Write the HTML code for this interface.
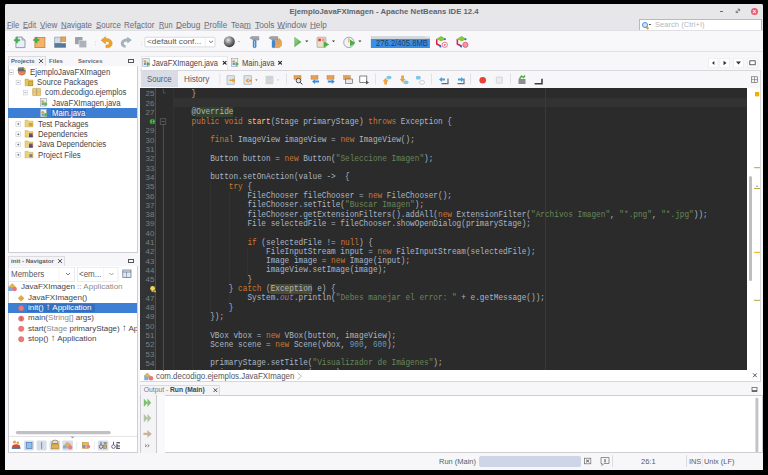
<!DOCTYPE html>
<html><head><meta charset="utf-8">
<style>
*{margin:0;padding:0;box-sizing:border-box}
html,body{width:768px;height:475px;overflow:hidden;background:#000}
body{position:relative;font-family:"Liberation Sans",sans-serif;color:#333}
.a{position:absolute}
.t{position:absolute;white-space:pre;line-height:1;z-index:3}
svg.a{z-index:2}
.menu{font-size:8.1px;color:#6a6a74;top:21.2px}
.menu u{text-decoration:underline;text-decoration-thickness:0.6px;text-underline-offset:0px;text-decoration-color:#9a9aa4}
.cl{position:absolute;z-index:3;left:172.6px;font-family:"Liberation Mono",monospace;font-size:8.8px;line-height:9.3px;height:9.3px;white-space:pre;color:#a9b7c6;transform:scaleX(0.8807);transform-origin:0 0}
.ln{position:absolute;z-index:3;left:140px;width:14.3px;text-align:right;font-family:"Liberation Sans",sans-serif;font-size:7.9px;padding-top:0.9px;line-height:9.3px;color:#7d7f82}
.k{color:#cc7832}.s{color:#6a8759}.n{color:#6897bb}.m{color:#ffc66d}.f{color:#9876aa;font-style:italic}
.ov{}.ex{}
.tr{position:absolute;z-index:3;white-space:pre;font-size:7.8px;line-height:10px;color:#3a3a3a}
.g{color:#8c8c8c}
.tab{position:absolute;white-space:pre;font-size:6.1px;font-weight:bold;line-height:1;color:#555;z-index:3}
</style></head><body>
<!-- window -->
<div class="a" style="left:5px;top:4px;width:758px;height:465.8px;background:#f7f7f9;border-radius:2px 2px 0 0"></div>
<!-- title + menubar -->
<div class="a" style="left:5px;top:4px;width:758px;height:26.2px;background:#e7e7ea;border-radius:2px 2px 0 0"></div>
<div class="t" style="left:5px;width:758px;text-align:center;top:8px;font-size:7.75px;font-weight:bold;color:#62656e">EjemploJavaFXImagen - Apache NetBeans IDE 12.4</div>
<!-- window buttons -->
<div class="a" style="left:719.6px;top:10.9px;width:3.8px;height:1px;background:#6a6a6a"></div>

<div class="a" style="left:750.7px;top:7.6px;width:7.4px;height:7.4px;border-radius:50%;background:#ea5a5e"></div>
<div class="t" style="left:750.7px;top:8.9px;width:7.4px;text-align:center;font-size:6.5px;font-weight:bold;color:#fff">×</div>
<!-- menu -->
<!-- search -->
<div class="a" style="left:639.4px;top:19.2px;width:122.5px;height:11.6px;background:#fff;border:1px solid #b9b9bd"></div>
<div class="a" style="left:641.5px;top:21.5px;width:6px;height:6px;border-radius:50%;border:1.3px solid #4a8fd8;background:#cfe3f7"></div>
<div class="a" style="left:646px;top:26.5px;width:3px;height:1.6px;background:#c89c3c;transform:rotate(45deg)"></div>
<!-- toolbar -->
<div class="a" style="left:5px;top:30.2px;width:758px;height:22.3px;background:#f8f8fa;border-top:0.6px solid #e0e0e4;border-bottom:1px solid #e0e0e4"></div>


<!-- ===== PROJECTS PANEL ===== -->
<div class="a" style="left:7.5px;top:55.5px;width:38.2px;height:11px;background:#f4f4f6;border:0.7px solid #dcdce0;border-bottom:none"></div>

<div class="a" style="left:128.4px;top:58.7px;width:5.5px;height:4.4px;border:0.8px solid #555;border-bottom-width:1.6px"></div>
<div class="a" style="left:7.5px;top:66.3px;width:130px;height:186.5px;background:#fff;border:1px solid #cdcdd2;border-top:none"></div>
<div class="a" style="left:8px;top:108px;width:129px;height:10px;background:#3d7fd4"></div>
<div class="t" style="left:30px;top:67.77px;font-size:8.3px;color:#44444e;transform:scaleX(0.935);transform-origin:0 0;">EjemploJavaFXImagen</div>
<div class="t" style="left:37.4px;top:78.12px;font-size:8.3px;color:#44444e;transform:scaleX(0.935);transform-origin:0 0;">Source Packages</div>
<div class="t" style="left:44.7px;top:88.47px;font-size:8.3px;color:#44444e;transform:scaleX(0.935);transform-origin:0 0;">com.decodigo.ejemplos</div>
<div class="t" style="left:52px;top:98.82px;font-size:8.3px;color:#44444e;transform:scaleX(0.935);transform-origin:0 0;">JavaFXImagen.java</div>
<div class="t" style="left:52px;top:109.17px;font-size:8.3px;color:#fff;transform:scaleX(0.935);transform-origin:0 0;">Main.java</div>
<div class="t" style="left:37.5px;top:119.52px;font-size:8.3px;color:#44444e;transform:scaleX(0.935);transform-origin:0 0;">Test Packages</div>
<div class="t" style="left:37.5px;top:129.87px;font-size:8.3px;color:#44444e;transform:scaleX(0.935);transform-origin:0 0;">Dependencies</div>
<div class="t" style="left:37.5px;top:140.22px;font-size:8.3px;color:#44444e;transform:scaleX(0.935);transform-origin:0 0;">Java Dependencies</div>
<div class="t" style="left:37.5px;top:150.57px;font-size:8.3px;color:#44444e;transform:scaleX(0.935);transform-origin:0 0;">Project Files</div>
<div class="a" style="left:8px;top:282px;width:129px;height:148px;overflow:hidden;z-index:3"><div class="a" style="left:-8px;top:-282px;width:768px;height:475px">
<div class="t" style="left:21px;top:283.44px;font-size:8.1px;color:#44444e;transform:scaleX(0.99);transform-origin:0 0;">JavaFXImagen <span class="g">:: Application</span></div>
<div class="t" style="left:28.3px;top:293.79px;font-size:8.1px;color:#44444e;transform:scaleX(0.99);transform-origin:0 0;">JavaFXImagen()</div>
<div class="t" style="left:27.7px;top:304.14px;font-size:8.1px;color:#fff;transform:scaleX(0.99);transform-origin:0 0;">init() <span style="font-size:9.5px;line-height:0">↑</span> Application</div>
<div class="t" style="left:27.7px;top:314.49px;font-size:8.1px;color:#44444e;transform:scaleX(0.99);transform-origin:0 0;">main(<span class="g">String[]</span> args)</div>
<div class="t" style="left:27.7px;top:324.84px;font-size:8.1px;color:#44444e;transform:scaleX(0.99);transform-origin:0 0;">start(<span class="g">Stage</span> primaryStage) <span style="font-size:9.5px;line-height:0">↑</span> Application</div>
<div class="t" style="left:27.7px;top:335.19px;font-size:8.1px;color:#44444e;transform:scaleX(0.99);transform-origin:0 0;">stop() <span style="font-size:9.5px;line-height:0">↑</span> Application</div>
</div></div>
<div class="t" style="left:11.1px;top:269.90px;font-size:8.5px;color:#5a5a64;transform:scaleX(0.94);transform-origin:0 0;">Members</div>
<div class="t" style="left:79.3px;top:269.90px;font-size:8.5px;color:#5a5a64;transform:scaleX(0.94);transform-origin:0 0;">&lt;em...</div>
<div class="a" style="left:51px;top:108.6px;width:35px;height:8.8px;background:#356fc0;z-index:1"></div>
<div class="a" style="left:27px;top:303.6px;width:68px;height:8.8px;background:#356fc0;z-index:1"></div>

<!-- ===== NAVIGATOR PANEL ===== -->
<div class="a" style="left:7.7px;top:255.7px;width:57px;height:11px;background:#f4f4f6;border:0.7px solid #dcdce0;border-bottom:none"></div>

<div class="a" style="left:128.4px;top:258.7px;width:5.5px;height:4.4px;border:0.8px solid #555;border-bottom-width:1.6px"></div>
<div class="a" style="left:7.5px;top:266.3px;width:130px;height:187px;background:#fff;border:1px solid #cdcdd2;border-top:none"></div>
<div class="a" style="left:8px;top:303px;width:129px;height:10px;background:#3d7fd4"></div>
<!--NAV-->

<!-- ===== EDITOR ===== -->
<div class="a" style="left:141px;top:55.7px;width:87.4px;height:14.5px;background:#fff;border:0.6px solid #e8e8ec;border-bottom:none"></div>


<div class="a" style="left:140px;top:70px;width:621px;height:18.4px;background:#f7f7f9;border-top:0.8px solid #d8d8dc;border-right:0.8px solid #d8d8dc"></div>
<div class="a" style="left:141px;top:71px;width:36.6px;height:16px;background:#d8dce6"></div>
<!--EDTOOL-->

<div class="a" id="codewrap" style="left:140px;top:88.4px;width:607px;height:281.6px;overflow:hidden">
<div class="a" style="left:0;top:0;width:607px;height:283px;background:#2b2b2b"></div>
<div class="a" style="left:0;top:0;width:15px;height:283px;background:#313335"></div>
<div class="a" style="left:15px;top:0;width:1px;height:283px;background:#4a4c4e"></div>
<div class="a" style="left:32.6px;top:9.3px;width:574px;height:9.3px;background:#323232"></div>
<div class="a" style="left:404.6px;top:0;width:1px;height:283px;background:#3a3a3a"></div>
<div class="a" style="left:-140px;top:-88.4px;width:768px;height:475px">
<div class="a" style="left:195.9px;top:107.2px;width:37.5px;height:9.8px;background:#34432f;z-index:2"></div>
<div class="a" style="left:269.9px;top:284px;width:42.4px;height:9.6px;background:#4e4a32;z-index:2"></div>
<div class="a" style="left:173.00px;top:88.4px;width:0.8px;height:282.3px;background:#323232;z-index:1"></div>
<div class="a" style="left:191.60px;top:125px;width:0.8px;height:245.7px;background:#323232;z-index:1"></div>
<div class="a" style="left:210.20px;top:181.4px;width:0.8px;height:130.2px;background:#323232;z-index:1"></div>
<div class="a" style="left:228.80px;top:190.7px;width:0.8px;height:93.0px;background:#323232;z-index:1"></div>
<div class="a" style="left:228.80px;top:293px;width:0.8px;height:9.3px;background:#323232;z-index:1"></div>
<div class="a" style="left:247.40px;top:246.5px;width:0.8px;height:27.9px;background:#323232;z-index:1"></div>
<div class="cl" style="top:89.70px">    }</div>
<div class="ln" style="top:88.40px">25</div>
<div class="cl" style="top:99.00px"></div>
<div class="ln" style="top:97.70px">26</div>
<div class="cl" style="top:108.30px">    @<span class="ov">Override</span></div>
<div class="ln" style="top:107.00px">27</div>
<div class="cl" style="top:117.60px">    <span class="k">public</span> <span class="k">void</span> <span class="m">start</span>(Stage primaryStage) <span class="k">throws</span> Exception {</div>
<div class="cl" style="top:126.90px"></div>
<div class="ln" style="top:125.60px">29</div>
<div class="cl" style="top:136.20px">        <span class="k">final</span> ImageView imageView = <span class="k">new</span> ImageView();</div>
<div class="ln" style="top:134.90px">30</div>
<div class="cl" style="top:145.50px"></div>
<div class="ln" style="top:144.20px">31</div>
<div class="cl" style="top:154.80px">        Button button = <span class="k">new</span> Button(<span class="s">&quot;Seleccione Imagen&quot;</span>);</div>
<div class="ln" style="top:153.50px">32</div>
<div class="cl" style="top:164.10px"></div>
<div class="ln" style="top:162.80px">33</div>
<div class="cl" style="top:173.40px">        button.setOnAction(value -&gt;  {</div>
<div class="ln" style="top:172.10px">34</div>
<div class="cl" style="top:182.70px">            <span class="k">try</span> {</div>
<div class="ln" style="top:181.40px">35</div>
<div class="cl" style="top:192.00px">                FileChooser fileChooser = <span class="k">new</span> FileChooser();</div>
<div class="ln" style="top:190.70px">36</div>
<div class="cl" style="top:201.30px">                fileChooser.setTitle(<span class="s">&quot;Buscar Imagen&quot;</span>);</div>
<div class="ln" style="top:200.00px">37</div>
<div class="cl" style="top:210.60px">                fileChooser.getExtensionFilters().addAll(<span class="k">new</span> ExtensionFilter(<span class="s">&quot;Archivos Imagen&quot;</span>, <span class="s">&quot;*.png&quot;</span>, <span class="s">&quot;*.jpg&quot;</span>));</div>
<div class="ln" style="top:209.30px">38</div>
<div class="cl" style="top:219.90px">                File selectedFile = fileChooser.showOpenDialog(primaryStage);</div>
<div class="ln" style="top:218.60px">39</div>
<div class="cl" style="top:229.20px"></div>
<div class="ln" style="top:227.90px">40</div>
<div class="cl" style="top:238.50px">                <span class="k">if</span> (selectedFile != <span class="k">null</span>) {</div>
<div class="ln" style="top:237.20px">41</div>
<div class="cl" style="top:247.80px">                    FileInputStream input = <span class="k">new</span> FileInputStream(selectedFile);</div>
<div class="ln" style="top:246.50px">42</div>
<div class="cl" style="top:257.10px">                    Image image = <span class="k">new</span> Image(input);</div>
<div class="ln" style="top:255.80px">43</div>
<div class="cl" style="top:266.40px">                    imageView.setImage(image);</div>
<div class="ln" style="top:265.10px">44</div>
<div class="cl" style="top:275.70px">                }</div>
<div class="ln" style="top:274.40px">45</div>
<div class="cl" style="top:285.00px">            } <span class="k">catch</span> (<span class="ex">Exception</span> e) {</div>
<div class="cl" style="top:294.30px">                System.<span class="f">out</span>.println(<span class="s">&quot;Debes manejar el error: &quot;</span> + e.getMessage());</div>
<div class="ln" style="top:293.00px">47</div>
<div class="cl" style="top:303.60px">            }</div>
<div class="ln" style="top:302.30px">48</div>
<div class="cl" style="top:312.90px">        });</div>
<div class="ln" style="top:311.60px">49</div>
<div class="cl" style="top:322.20px"></div>
<div class="ln" style="top:320.90px">50</div>
<div class="cl" style="top:331.50px">        VBox vbox = <span class="k">new</span> VBox(button, imageView);</div>
<div class="ln" style="top:330.20px">51</div>
<div class="cl" style="top:340.80px">        Scene scene = <span class="k">new</span> Scene(vbox, <span class="n">900</span>, <span class="n">600</span>);</div>
<div class="ln" style="top:339.50px">52</div>
<div class="cl" style="top:350.10px"></div>
<div class="ln" style="top:348.80px">53</div>
<div class="cl" style="top:359.40px">        primaryStage.setTitle(<span class="s">&quot;Visualizador de Imágenes&quot;</span>);</div>
<div class="ln" style="top:358.10px">54</div>
<div class="cl" style="top:368.70px">        primaryStage.setScene(scene);</div>
<div class="ln" style="top:367.40px">55</div>
</div>
</div>
<!-- right scroll strip -->
<div class="a" style="left:747px;top:88.4px;width:14px;height:282.3px;background:#fff;border-right:0.8px solid #d8d8dc"></div>
<div class="a" style="left:749px;top:175.5px;width:3px;height:105px;border-radius:1.5px;background:#bdbdc2"></div>

<!-- breadcrumb -->
<div class="a" style="left:140px;top:370px;width:621px;height:11.7px;background:#fff;border-bottom:1px solid #d8d8dc;border-right:0.8px solid #d8d8dc"></div>

<!-- output -->
<div class="a" style="left:140.4px;top:385px;width:79.4px;height:10px;background:#f4f4f6;border:0.7px solid #dcdce0;border-bottom:none"></div>

<div class="a" style="left:140.4px;top:394.7px;width:622.6px;height:58.6px;background:#fff;border:1px solid #cdcdd2"></div>
<div class="a" style="left:141px;top:395px;width:15.6px;height:58px;background:#f4f4f6;border-right:1px solid #c9c9cd"></div>
<div class="a" style="left:156.8px;top:395.2px;width:8px;height:57.6px;background:#f9f9fb"></div>

<!-- status bar -->
<div class="a" style="left:479px;top:456.4px;width:102px;height:10.4px;border-radius:2px;background:#cdd5e6"></div>
<div class="a" style="left:686px;top:455px;width:0.7px;height:12px;background:#dcdce0"></div>
<div class="a" style="left:612px;top:455px;width:0.7px;height:12px;background:#dcdce0"></div>
<svg class="a" style="left:0;top:0" width="768" height="475" viewBox="0 0 768 475">
<defs>
<linearGradient id="rung" x1="0" y1="0" x2="1" y2="1"><stop offset="0" stop-color="#a6e08a"/><stop offset="1" stop-color="#3a9e30"/></linearGradient>
<radialGradient id="globe" cx="0.4" cy="0.35" r="0.7"><stop offset="0" stop-color="#e8e8e8"/><stop offset="0.45" stop-color="#8a8a8a"/><stop offset="1" stop-color="#2a2a2a"/></radialGradient>
</defs>
<path d="M736.2 12.6 l3.4 -3.4 M737.6 9.2 h2 v2 M736.2 10.6 v2 h2" fill="none" stroke="#666" stroke-width="0.8"/>
<path d="M648.6 24 l1.4 1.2 l1.4 -1.2 Z" fill="#333"/>
<!-- separators toolbar -->
<g fill="#c8c8cc"><rect x="8.2" y="41.5" width="0.8" height="0.8"/><rect x="8.2" y="44.5" width="0.8" height="0.8"/>
<rect x="95.2" y="41.5" width="0.8" height="0.8"/><rect x="95.2" y="44.5" width="0.8" height="0.8"/>
<rect x="140.9" y="41.5" width="0.8" height="0.8"/><rect x="140.9" y="44.5" width="0.8" height="0.8"/></g>
<!-- new file -->
<path d="M15.9 37 H22 L25 40 V47.6 H15.9 Z" fill="#e9eff6" stroke="#7d8896" stroke-width="0.8"/>
<path d="M22 37 V40 H25" fill="#c9d3de" stroke="#7d8896" stroke-width="0.6"/>
<path d="M16.2 37.4 h1.6 v2 h2 v1.6 h-2 v2 h-1.6 v-2 h-2 v-1.6 h2 Z" fill="#3fb34a" stroke="#2a8a35" stroke-width="0.3"/>
<!-- new project -->
<rect x="34.9" y="37.5" width="10" height="10.1" fill="#f3b46a" stroke="#c0803e" stroke-width="0.8"/>
<path d="M35.5 37.2 h1.6 v2 h2 v1.6 h-2 v2 h-1.6 v-2 h-2 v-1.6 h2 Z" fill="#3fb34a" stroke="#2a8a35" stroke-width="0.3"/>
<!-- open project -->
<path d="M54.6 37.2 h6.2 v6.4 h-6.2 Z" fill="#d3dde8" stroke="#8090a0" stroke-width="0.6"/>
<rect x="61" y="36.9" width="4.8" height="4.6" fill="#e9a54e" stroke="#b87830" stroke-width="0.5"/>
<path d="M54.3 43.2 H65.9 V47.7 H54.3 Z" fill="#56789a"/>
<!-- close project -->
<rect x="75" y="37" width="7.6" height="7.3" rx="0.8" fill="#9da1a7"/>
<rect x="79" y="40.4" width="7.6" height="7.3" rx="0.8" fill="#aeb2b8" stroke="#f4f4f6" stroke-width="0.5"/>
<!-- undo -->
<path d="M101 40.3 L105.6 36.6 V38.4 C109.8 38.2 112.2 40.5 112.2 43.4 C112.2 46.4 109.6 48 105.9 47.7 V45 C108 45.1 109.2 44.4 109.2 43.2 C109.2 41.9 108 41.3 105.6 41.5 V43.9 Z" fill="#eea22c" stroke="#d08418" stroke-width="0.4"/>
<!-- redo -->
<path d="M131.9 40 L127.3 36.8 V38.5 C123.3 38.4 120.8 40.8 120.8 43.6 C120.8 46.4 122.9 47.9 125.6 47.7 V45 C124.4 45 123.8 44.4 123.8 43.4 C123.8 42.1 125 41.4 127.3 41.5 V43.4 Z" fill="#a3b2bf"/>
<!-- combo -->
<rect x="144.9" y="37.3" width="70.1" height="9.6" rx="1" fill="#fff" stroke="#c9cbd3" stroke-width="0.7"/>
<line x1="205.4" y1="37.8" x2="205.4" y2="46.5" stroke="#e2e3e8" stroke-width="0.6"/>
<path d="M209 40.8 L211 42.6 L213 40.8" fill="none" stroke="#555" stroke-width="0.8"/>
<!-- globe -->
<circle cx="229.3" cy="41.7" r="5.5" fill="url(#globe)"/>
<rect x="238.3" y="41.1" width="1.6" height="0.7" fill="#999"/>
<!-- hammer -->
<path d="M250 38.2 C250.5 36.6 252 36.4 254.5 36.5 L258.8 36.6 L259 40 L256.2 40.2 L253 40.2 L251.8 39 Z" fill="#9ea3a8" stroke="#7a7e84" stroke-width="0.4"/>
<rect x="253" y="40.2" width="3.2" height="7.6" rx="1.2" fill="#3f8ad8" stroke="#2a6ab0" stroke-width="0.3"/>
<rect x="254.1" y="41" width="1" height="6" fill="#a8d0f4"/>
<!-- clean build -->
<path d="M269 38.2 C269.5 36.6 271 36.4 273.5 36.5 L277.8 36.6 L278 40 L275.2 40.2 L272 40.2 L270.8 39 Z" fill="#9ea3a8" stroke="#7a7e84" stroke-width="0.4"/>
<rect x="272" y="40.2" width="3.2" height="7.6" rx="1.2" fill="#3f8ad8" stroke="#2a6ab0" stroke-width="0.3"/>
<path d="M276 40.5 L279.5 38.6 L281.4 41 L281.6 45.5 L279 47.8 L274.6 47.4 L275.5 43 Z" fill="#e8a85a" stroke="#b87830" stroke-width="0.4"/>
<path d="M277 42 l2.5 -1.5 M277.5 44 l3 -1.6" stroke="#c88a40" stroke-width="0.5"/>
<!-- run -->
<path d="M294.7 37.3 L301 42 L294.7 46.7 Z" fill="url(#rung)" stroke="#3a9030" stroke-width="0.4"/>
<path d="M305.3 40.6 h3 l-1.5 1.6 Z" fill="#333"/>
<!-- debug -->
<rect x="317" y="37.2" width="9" height="10.2" rx="0.6" fill="#e8e0c8" stroke="#999" stroke-width="0.6"/>
<rect x="318.3" y="38.6" width="2.6" height="2.6" fill="#d84040"/>
<rect x="322" y="38.6" width="2.6" height="2.6" fill="#f09090"/>
<path d="M323.6 41.2 L329.3 44.4 L323.6 47.6 Z" fill="#4cb040"/>
<path d="M332.0 40.6 h3 l-1.5 1.6 Z" fill="#333"/>
<!-- profile -->
<circle cx="348.9" cy="42.4" r="5.2" fill="#eef3f8" stroke="#8a96a4" stroke-width="0.8"/>
<rect x="348.5" y="38.4" width="0.8" height="4" fill="#e07a30"/>
<path d="M350 39.6 L355.4 43 L350 46.6 Z" fill="#4cb040"/>
<path d="M358.4 40.6 h3 l-1.5 1.6 Z" fill="#333"/>
<!-- memory bar -->
<rect x="370.9" y="36.2" width="59" height="11.8" fill="#dde0e4"/>
<rect x="370.9" y="38.8" width="59" height="9.2" fill="#3a8ee6"/>
<rect x="370.9" y="36.2" width="54" height="2.6" fill="#d3d7dc"/>
<!-- netbeans cubes -->
<g transform="translate(441,41.6)">
<path d="M0 -5.5 L5 -2.6 L0 0 L-5 -2.6 Z" fill="#8cc63e"/>
<path d="M-5 -2.6 L-5 3 L0 5.6 L0 3.5 L-3.3 1.8 L-3.3 -1.8 Z" fill="#d4204c"/>
<path d="M-3.3 -1.8 L0 0 L0 3.5 L-3.3 1.8 Z" fill="#f2f2f2"/>
<circle cx="3.9" cy="-2.3" r="1" fill="#2a6fd0"/><circle cx="-0.5" cy="4.8" r="1" fill="#2a6fd0"/>
<circle cx="3.8" cy="3.2" r="2.6" fill="#fff" stroke="#d84060" stroke-width="0.7"/><circle cx="3.8" cy="3.2" r="0.9" fill="#d84060"/>
</g>
<g transform="translate(461.6,41.6)">
<path d="M0 -5.5 L5 -2.6 L0 0 L-5 -2.6 Z" fill="#8cc63e"/>
<path d="M-5 -2.6 L-5 3 L0 5.6 L0 3.5 L-3.3 1.8 L-3.3 -1.8 Z" fill="#d4204c"/>
<path d="M-3.3 -1.8 L0 0 L0 3.5 L-3.3 1.8 Z" fill="#f2f2f2"/>
<circle cx="3.9" cy="-2.3" r="1" fill="#2a6fd0"/><circle cx="-0.5" cy="4.8" r="1" fill="#2a6fd0"/>
<circle cx="3.8" cy="3.2" r="2.6" fill="#f29aa8" stroke="#d84060" stroke-width="0.7"/>
</g>
<!-- project tree expanders -->
<g fill="#fff" stroke="#c5cad8" stroke-width="0.6">
<rect x="9.2" y="70" width="4.3" height="4.4"/><rect x="16.1" y="80.3" width="4.3" height="4.4"/><rect x="23.3" y="90.6" width="4.3" height="4.4"/>
<rect x="15.9" y="121.6" width="4.6" height="4.6"/><rect x="15.9" y="131.9" width="4.6" height="4.6"/><rect x="15.9" y="142.2" width="4.6" height="4.6"/><rect x="15.9" y="152.5" width="4.6" height="4.6"/>
</g>
<g fill="#444">
<rect x="10.3" y="72" width="2.1" height="0.5"/><rect x="17.2" y="82.3" width="2.1" height="0.5"/><rect x="24.4" y="92.6" width="2.1" height="0.5"/>
<rect x="17.1" y="123.7" width="2.2" height="0.5"/><rect x="17.95" y="122.85" width="0.5" height="2.2"/>
<rect x="17.1" y="134" width="2.2" height="0.5"/><rect x="17.95" y="133.15" width="0.5" height="2.2"/>
<rect x="17.1" y="144.3" width="2.2" height="0.5"/><rect x="17.95" y="143.45" width="0.5" height="2.2"/>
<rect x="17.1" y="154.6" width="2.2" height="0.5"/><rect x="17.95" y="153.75" width="0.5" height="2.2"/>
</g>
<!-- project icon -->
<path d="M17.9 70.6 C17.9 74.6 19.6 75.4 21.8 75.4 C24 75.4 25.9 74.6 25.9 70.6 Z" fill="#d2704c"/>
<path d="M19 72.4 C20.5 73.6 23.5 73.6 24.6 72.4" fill="none" stroke="#f0b090" stroke-width="0.7"/>
<path d="M17.6 70.9 L18.2 67.6 L23.6 67.2 L25.8 70.9 Z" fill="#62666c"/>
<path d="M18.8 68.4 h3.4" stroke="#9aa0a6" stroke-width="0.6"/>
<path d="M23.4 67.2 L25.6 68.2 L25.2 70.4 L23.8 69.6 Z" fill="#d8c030"/>
<!-- source packages folder -->
<path d="M25 79 h3 l0.8 1 h4.2 v5.8 h-8 Z" fill="#e6c45a" stroke="#b8942a" stroke-width="0.4"/>
<rect x="28.6" y="81.8" width="4.2" height="4" fill="#d8b04a" stroke="#9a7a20" stroke-width="0.4"/>
<!-- package -->
<rect x="32.6" y="88.4" width="8" height="7.2" rx="0.5" fill="#e9cb7c" stroke="#b8964a" stroke-width="0.5"/>
<line x1="36.6" y1="88.6" x2="36.6" y2="95.4" stroke="#a88640" stroke-width="0.6"/>
<line x1="32.8" y1="91.8" x2="40.4" y2="91.8" stroke="#c8a860" stroke-width="0.4"/>
<!-- java files -->
<g id="jf">
<rect x="40.4" y="98.3" width="6.2" height="7.8" fill="#e8edf2" stroke="#8a949e" stroke-width="0.5"/>
<circle cx="42.6" cy="101.5" r="1.3" fill="#e0a040"/><rect x="41.6" y="102.8" width="2.4" height="2.2" fill="#6a9ad0"/>
<path d="M44.4 101.8 L47.6 104 L44.4 106.2 Z" fill="#4cb040"/>
</g>
<use href="#jf" x="0" y="10.8"/>
<!-- folders -->
<g id="fold">
<path d="M25 120.2 h3 l0.8 1 h4.2 v5.6 h-8 Z" fill="#ead17a" stroke="#c0a040" stroke-width="0.4"/>
</g>
<rect x="28.8" y="123" width="3.8" height="3.4" fill="#c8a44a"/>
<use href="#fold" y="10.35"/><use href="#fold" y="20.7"/><use href="#fold" y="31.05"/>
<rect x="29" y="133.3" width="3.6" height="3.8" fill="#8a4a6a"/><rect x="29" y="135.5" width="3.6" height="1.6" fill="#3a4a8a"/>
<rect x="29" y="143.6" width="3.6" height="3.8" fill="#8a4a6a"/><rect x="29" y="145.8" width="3.6" height="1.6" fill="#3a4a8a"/>
<rect x="29.4" y="154.2" width="3" height="3" fill="#7a7f88"/>
<!-- navigator class icon -->
<path d="M12.2 283.5 L15.2 286.5 L12.2 289.5 L9.2 286.5 Z" fill="#e8b450" stroke="#b08030" stroke-width="0.4"/>
<rect x="8.2" y="287" width="4.6" height="4" fill="#7ab0e0"/>
<circle cx="14.6" cy="289" r="2.3" fill="#f07080"/>
<path d="M21.1 295.4 L24 298.3 L21.1 301.2 L18.2 298.3 Z" fill="#e4aa40" stroke="#b88028" stroke-width="0.4"/>
<g fill="#ec7a7a" stroke="#d05858" stroke-width="0.4">
<circle cx="21.2" cy="308.2" r="2.7"/><circle cx="21.2" cy="318.6" r="2.7"/><circle cx="21.2" cy="328.8" r="2.7"/><circle cx="21.2" cy="339.2" r="2.7"/>
</g>
<line x1="21.2" y1="316.8" x2="21.2" y2="320.4" stroke="#a03030" stroke-width="0.6"/>
<!-- navigator combos -->
<rect x="8.6" y="267.2" width="65.8" height="14.2" fill="#fff" stroke="#dde0ea" stroke-width="0.6"/>
<line x1="59.2" y1="267.4" x2="59.2" y2="281.2" stroke="#eceef4" stroke-width="0.6"/>
<path d="M66 273 L68 275 L70 273" fill="none" stroke="#555" stroke-width="0.8"/>
<rect x="77.6" y="267.2" width="40.4" height="14.2" fill="#fff" stroke="#dde0ea" stroke-width="0.6"/>
<line x1="103.6" y1="267.4" x2="103.6" y2="281.2" stroke="#eceef4" stroke-width="0.6"/>
<path d="M109.5 273 L111.5 275 L113.5 273" fill="none" stroke="#888" stroke-width="0.8"/>
<rect x="122.8" y="270" width="8.2" height="7.6" fill="#dfe8f2" stroke="#5a6e86" stroke-width="0.7"/>
<line x1="122.8" y1="272" x2="131" y2="272" stroke="#5a6e86" stroke-width="0.7"/>
<line x1="126.5" y1="272" x2="126.5" y2="277.6" stroke="#5a6e86" stroke-width="0.5"/>
<!-- navigator hscroll + filter bar -->
<rect x="15.8" y="431" width="95" height="3.2" rx="1.6" fill="#c0c0c4"/>
<line x1="8" y1="436.4" x2="137" y2="436.4" stroke="#cfd0d6" stroke-width="0.6"/>
<path d="M70.5 436.6 L72.5 438.4 L74.5 436.6 Z" fill="#a0a0a8"/>
<g fill="#d9dde6"><rect x="24" y="440.6" width="10" height="9.8" rx="1"/><rect x="36.6" y="440.6" width="10" height="9.8" rx="1"/><rect x="49.6" y="440.6" width="10.6" height="9.8" rx="1"/><rect x="62.4" y="440.6" width="10.6" height="9.8" rx="1"/><rect x="97.8" y="440.6" width="10.6" height="9.8" rx="1"/></g>
<g>
<circle cx="14.5" cy="442" r="1.6" fill="#e8a050"/><circle cx="17.8" cy="442.8" r="1.4" fill="#e8a050"/>
<path d="M12 447 C12 444 17 443.5 20 445.5 V447.5 Z" fill="#d04a3a"/><rect x="11.8" y="447.2" width="8.6" height="1.6" fill="#3a5a8a"/>
<rect x="26.2" y="442.6" width="5.8" height="5.8" fill="#8cc0ee" stroke="#3a6ab0" stroke-width="0.6"/>
<rect x="41.2" y="442" width="0.9" height="7" fill="#5a8ac8"/>
<path d="M52 443.5 h6 v-1 a2 1.6 0 0 0 -6 0 Z" fill="none" stroke="#806020" stroke-width="0.6"/>
<rect x="51.5" y="444" width="7" height="4.8" fill="#e0b050" stroke="#a07820" stroke-width="0.5"/>
<path d="M64 445.5 L67.2 442.2 L71 444.6 L67.8 448.4 Z" fill="#e0b060" stroke="#b08030" stroke-width="0.3"/><rect x="63" y="445.5" width="3.5" height="3" fill="#7ab0e0"/><circle cx="70.2" cy="447.4" r="2.1" fill="#f07a8a"/>
<rect x="76.5" y="441.5" width="0.6" height="8" fill="#e0e0e4"/>
<rect x="82.2" y="442.4" width="6.2" height="6" fill="#e8b860" stroke="#a07820" stroke-width="0.4"/><rect x="82.6" y="445" width="2.6" height="3" fill="#6a9ad0"/><circle cx="88.4" cy="446.6" r="1.8" fill="#f07a8a"/>
<rect x="94" y="441.5" width="0.6" height="8" fill="#e0e0e4"/>
<circle cx="101" cy="446.6" r="1.8" fill="none" stroke="#5a6270" stroke-width="0.9"/><rect x="100.5" y="441.8" width="1" height="3" fill="#5a6270"/>
<rect x="103.6" y="442" width="3.2" height="2.6" fill="#8a929e"/><rect x="103.6" y="445.4" width="3.2" height="3.2" fill="#d8a860" stroke="#5a6270" stroke-width="0.4"/>
<circle cx="113.5" cy="446.6" r="1.8" fill="none" stroke="#5a6270" stroke-width="0.9"/><rect x="113" y="441.8" width="1" height="3" fill="#5a6270"/>
<rect x="116.4" y="442" width="3.6" height="1.4" fill="#5a6270"/><rect x="116.4" y="444" width="1.2" height="5" fill="#5a6270"/><rect x="116.4" y="445.4" width="3.6" height="1.2" fill="#5a6270"/><rect x="116.4" y="447.8" width="3.6" height="1.2" fill="#5a6270"/>
</g>
<!-- editor tab icons -->
<g id="jt">
<rect x="142.8" y="58.3" width="6.4" height="8" fill="#e8edf2" stroke="#8a949e" stroke-width="0.5"/>
<circle cx="145" cy="61.5" r="1.3" fill="#e0a040"/><rect x="144" y="62.8" width="2.4" height="2.2" fill="#6a9ad0"/>
<path d="M147 61.8 L150.3 64 L147 66.2 Z" fill="#4cb040"/>
</g>
<use href="#jt" x="88.6"/>
<!-- tab controls -->
<g fill="#fff" stroke="#e2e2ea" stroke-width="0.5"><rect x="708.5" y="58.2" width="9.4" height="9.6"/><rect x="720" y="58.2" width="9.4" height="9.6"/><rect x="733.6" y="58.2" width="10" height="9.6"/><rect x="747.4" y="58.2" width="10.4" height="9.6"/></g>
<g fill="#333">
<path d="M714.4 60.9 L712 63 L714.4 65.1 Z"/>
<path d="M723.5 60.8 L726.5 63 L723.5 65.2 Z"/>
<path d="M736 61.6 L741 61.6 L738.5 64.6 Z"/>
</g>

<rect x="749.8" y="60.8" width="5.4" height="4" fill="none" stroke="#333" stroke-width="0.8"/>
<!-- split icon -->
<rect x="751.5" y="76.8" width="6" height="5.6" fill="none" stroke="#555" stroke-width="0.6"/>
<line x1="754.5" y1="76.8" x2="754.5" y2="82.4" stroke="#555" stroke-width="0.5"/><line x1="751.5" y1="79.6" x2="757.5" y2="79.6" stroke="#555" stroke-width="0.5"/>
<!-- editor toolbar separators -->
<g fill="#d4d4d8"><rect x="219.6" y="73.5" width="0.6" height="11"/><rect x="286.3" y="73.5" width="0.6" height="11"/><rect x="375.3" y="73.5" width="0.6" height="11"/><rect x="431.4" y="73.5" width="0.6" height="11"/><rect x="470" y="73.5" width="0.6" height="11"/><rect x="510" y="73.5" width="0.6" height="11"/></g>
<!-- editor toolbar icons -->
<rect x="227" y="75.8" width="7.6" height="8.4" fill="#dde4ec" stroke="#8a949e" stroke-width="0.5"/>
<path d="M229.5 79.5 h3 v-1.6 l2.8 2.4 l-2.8 2.4 v-1.6 h-3 Z" fill="#e89a30"/>
<rect x="244" y="75.8" width="7.6" height="8.4" fill="#dde4ec" stroke="#8a949e" stroke-width="0.5"/>
<path d="M246 81 h3 v-1.6 l-2.8 2.4 Z M245.5 80.5 l3 -2.4 v1.6 h3.5 v1.8 h-3.5 v1.6 Z" fill="#e89a30"/>
<path d="M255.3 79.6 h2.2 l-1.1 1.1 Z" fill="#444"/>
<rect x="265.6" y="75.8" width="7.8" height="8.4" fill="#cfd2d6"/>
<path d="M267.5 80 h4 v-1.4 l2.4 2 l-2.4 2 v-1.4 h-4 Z" fill="#dcd8cc"/>
<path d="M276.9 79.6 h2.2 l-1.1 1.1 Z" fill="#bbb"/>
<rect x="294" y="75.6" width="7" height="3.6" fill="#e8a050" stroke="#b07030" stroke-width="0.4"/>
<circle cx="298.5" cy="80.6" r="2.3" fill="#dfe8f0" stroke="#333" stroke-width="0.8"/><line x1="300.2" y1="82.3" x2="302.4" y2="84.4" stroke="#333" stroke-width="1"/>
<rect x="311" y="75.6" width="7" height="3.6" fill="#e8a050" stroke="#b07030" stroke-width="0.4"/>
<path d="M312 81.5 l3 -2.3 v1.4 h4 v2 h-4 v1.4 Z" fill="#3a8ee0"/>
<rect x="327" y="75.6" width="7" height="3.6" fill="#e8a050" stroke="#b07030" stroke-width="0.4"/>
<path d="M334.8 81.5 l-3 -2.3 v1.4 h-4 v2 h4 v1.4 Z" fill="#3a8ee0"/>
<rect x="343.6" y="75.6" width="6.6" height="3.8" fill="#e8a050" stroke="#b07030" stroke-width="0.4"/>
<rect x="345.6" y="79" width="6.8" height="4.6" fill="#e8e8ea" stroke="#555" stroke-width="0.6"/>
<rect x="359.8" y="76" width="7" height="6.4" fill="#fff" stroke="#555" stroke-width="0.7"/>
<path d="M366 80.5 L369 82.5 L366 84.5 Z" fill="#555"/>
<path d="M382.6 81.5 L385.6 78 L388.6 81.5 H387 V84.4 H384.2 V81.5 Z" fill="#f0a040"/><ellipse cx="389" cy="77.6" rx="2.6" ry="1.8" fill="#7cc6e8"/>
<path d="M399.6 79 L402.6 82.5 L405.6 79 H404 V75.6 H401.2 V79 Z" fill="#f0a040"/><ellipse cx="406" cy="82.4" rx="2.6" ry="1.8" fill="#7cc6e8"/>
<rect x="416" y="76" width="4.6" height="3.6" rx="1" fill="#7cc6e8"/><ellipse cx="422" cy="82.4" rx="2.6" ry="1.8" fill="#fff" stroke="#999" stroke-width="0.5"/>
<path d="M439 79.5 l3 -2.6 v1.6 h3 v2 h-3 v1.6 Z" fill="#4aa0e0"/><path d="M441.5 83.6 h6.5 v-5" fill="none" stroke="#6a6e74" stroke-width="1.2"/>
<path d="M464 79.5 l-3 -2.6 v1.6 h-3 v2 h3 v1.6 Z" fill="#4aa0e0"/><path d="M457.5 83.6 h6.5 v-5" fill="none" stroke="#6a6e74" stroke-width="1.2"/>
<circle cx="482.7" cy="80.2" r="3.3" fill="#e8413a"/>
<rect x="496.3" y="77" width="6" height="6.2" rx="0.5" fill="#ececee" stroke="#c4c4c8" stroke-width="0.6"/>
<rect x="518.5" y="79" width="7" height="5" fill="#8a8e94"/><path d="M519.5 79 l2 -3 l2 1.5 l1.5 -2" fill="none" stroke="#4cb040" stroke-width="1.4"/>
<path d="M534.6 83.8 h7.4 v-5" fill="none" stroke="#3a3e44" stroke-width="1.6"/>
<!-- gutter icons -->
<circle cx="152.4" cy="121.5" r="2.6" fill="#4caf50" stroke="#2e7d32" stroke-width="0.4"/>
<rect x="151.9" y="119.6" width="1.1" height="1.4" fill="#1b5e20"/><rect x="151.9" y="121.8" width="1.1" height="1.6" fill="#1b5e20"/>
<rect x="160.2" y="118.8" width="5.6" height="5.6" fill="none" stroke="#6a6c6e" stroke-width="0.6"/>
<line x1="161.5" y1="121.6" x2="164.5" y2="121.6" stroke="#8a8c8e" stroke-width="0.6"/>
<line x1="163.4" y1="124.4" x2="163.4" y2="371" stroke="#606264" stroke-width="0.7"/>
<path d="M163.3 89 v4 h2.6" fill="none" stroke="#6a6c6e" stroke-width="0.6"/>
<circle cx="152.6" cy="288.4" r="2.4" fill="#f2d848"/>
<rect x="151.6" y="290.4" width="1.6" height="1.2" fill="#e8e0c0"/>
<rect x="153.4" y="290.6" width="2.6" height="1.6" rx="0.6" fill="#e0b820"/>
<!-- right stripe marks -->
<rect x="755" y="92" width="4.2" height="4.4" fill="#f0b000"/>
<rect x="754" y="167.2" width="6" height="1" fill="#b0a840"/>
<rect x="754" y="188" width="6" height="1" fill="#b0a840"/>
<path d="M755.5 186.6 l1.5 -1.2 l1.5 1.2 Z" fill="#666"/>
<rect x="754" y="251.8" width="6" height="1" fill="#f0b000"/>
<rect x="754" y="299.8" width="6" height="1" fill="#b0a840"/>
<!-- breadcrumb icon + chevron -->
<path d="M147.2 373 L150.4 376 L147.2 379 L144 376 Z" fill="#e8b450" stroke="#b08030" stroke-width="0.4"/>
<rect x="144.2" y="376.4" width="4.2" height="3.8" fill="#7ab0e0"/>
<circle cx="151" cy="378.2" r="2.3" fill="#f07080"/>
<path d="M297.5 372.8 L301.5 376.2 L297.5 379.6" fill="none" stroke="#aaa" stroke-width="0.8"/>
<path d="M753 373.4 l3.8 3.8 M756.8 373.4 l-3.8 3.8" stroke="#444" stroke-width="0.9"/>
<!-- output minimize -->
<rect x="752" y="387.4" width="5" height="4.2" fill="none" stroke="#555" stroke-width="0.7"/><rect x="752" y="390.2" width="5" height="1.4" fill="#555"/>
<!-- output strip icons -->
<path d="M143.8 398.6 L147.6 402.8 L143.8 407 Z M147.4 398.6 L151.2 402.8 L147.4 407 Z" fill="#7cc070"/>
<path d="M143.8 413.8 L147.6 418.2 L143.8 422.6 Z M147.4 413.8 L151.2 418.2 L147.4 422.6 Z" fill="#aec4a2"/>
<path d="M143.4 432.8 h4 v-2.8 l4.4 3.9 l-4.4 3.9 v-2.8 h-4 Z" fill="#c8b49c"/>
<path d="M145 444.5 l1.6 1.2 l-1.6 1.2 M147.6 444.5 l1.6 1.2 l-1.6 1.2" fill="none" stroke="#333" stroke-width="0.6"/>
<rect x="755.4" y="397.5" width="3" height="55" rx="1.5" fill="#c4c4c8"/>
<!-- status bar icons -->
<rect x="584.4" y="458.2" width="6.4" height="5.6" fill="#fff" stroke="#666" stroke-width="0.7"/>
<path d="M585.9 459.5 l3.4 3 M589.3 459.5 l-3.4 3" stroke="#333" stroke-width="0.8"/>
<path d="M601 457.5 h8 v6 h-5 l-2 2 v-2 h-1 Z" fill="#f4f6fa" stroke="#666" stroke-width="0.7"/>
<rect x="604.6" y="459" width="0.9" height="3.4" fill="#333"/>
<rect x="702" y="455" width="0.6" height="12" fill="#e0e0e4"/>
<!-- close crosses -->
<g stroke="#3a3a3a" stroke-width="0.9" stroke-linecap="round">
<path d="M39.3 59.4 l3.4 3.4 M42.7 59.4 l-3.4 3.4"/>
<path d="M58.3 259.4 l3.4 3.4 M61.7 259.4 l-3.4 3.4"/>
<path d="M213.8 388.6 l3.2 3.2 M217 388.6 l-3.2 3.2"/>
<path d="M223.2 61.3 l2.9 2.9 M226.1 61.3 l-2.9 2.9" stroke="#222" stroke-width="1.15"/>
<path d="M278.6 61.3 l2.9 2.9 M281.5 61.3 l-2.9 2.9" stroke="#222" stroke-width="1.15"/>
</g>
</svg>

<div class="t menu" style="left:6.6px;top:20.67px;font-size:8.3px;color:#6c6c78;transform:scaleX(0.905);transform-origin:0 0;"><u>F</u>ile</div>
<div class="t menu" style="left:22.8px;top:20.67px;font-size:8.3px;color:#6c6c78;transform:scaleX(0.916);transform-origin:0 0;"><u>E</u>dit</div>
<div class="t menu" style="left:39.8px;top:20.67px;font-size:8.3px;color:#6c6c78;transform:scaleX(0.970);transform-origin:0 0;"><u>V</u>iew</div>
<div class="t menu" style="left:60.9px;top:20.67px;font-size:8.3px;color:#6c6c78;transform:scaleX(0.946);transform-origin:0 0;"><u>N</u>avigate</div>
<div class="t menu" style="left:95.8px;top:20.67px;font-size:8.3px;color:#6c6c78;transform:scaleX(0.943);transform-origin:0 0;"><u>S</u>ource</div>
<div class="t menu" style="left:124.4px;top:20.67px;font-size:8.3px;color:#6c6c78;transform:scaleX(0.972);transform-origin:0 0;">Ref<u>a</u>ctor</div>
<div class="t menu" style="left:158.7px;top:20.67px;font-size:8.3px;color:#6c6c78;transform:scaleX(0.887);transform-origin:0 0;"><u>R</u>un</div>
<div class="t menu" style="left:175.9px;top:20.67px;font-size:8.3px;color:#6c6c78;"><u>D</u>ebug</div>
<div class="t menu" style="left:203.6px;top:20.67px;font-size:8.3px;color:#6c6c78;transform:scaleX(0.986);transform-origin:0 0;"><u>P</u>rofile</div>
<div class="t menu" style="left:231.3px;top:20.67px;font-size:8.3px;color:#6c6c78;transform:scaleX(0.980);transform-origin:0 0;">Tea<u>m</u></div>
<div class="t menu" style="left:254.5px;top:20.67px;font-size:8.3px;color:#6c6c78;transform:scaleX(1.006);transform-origin:0 0;"><u>T</u>ools</div>
<div class="t menu" style="left:277.3px;top:20.67px;font-size:8.3px;color:#6c6c78;"><u>W</u>indow</div>
<div class="t menu" style="left:310px;top:20.67px;font-size:8.3px;color:#6c6c78;transform:scaleX(0.978);transform-origin:0 0;"><u>H</u>elp</div>
<div class="t" style="left:655.1px;top:20.54px;font-size:8.1px;color:#b8b8bc;transform:scaleX(0.938);transform-origin:0 0;">Search (Ctrl+I)</div>
<div class="t" style="left:147px;top:37.91px;font-size:7.9px;color:#555;transform:scaleX(1.043);transform-origin:0 0;">&lt;default conf...</div>
<div class="t" style="left:10.9px;top:58.14px;font-size:6.1px;color:#606068;font-weight:bold;transform:scaleX(0.976);transform-origin:0 0;">Projects</div>
<div class="t" style="left:49px;top:58.14px;font-size:6.1px;color:#6a6a70;font-weight:bold;transform:scaleX(1.007);transform-origin:0 0;">Files</div>
<div class="t" style="left:77.5px;top:58.14px;font-size:6.1px;color:#6a6a70;font-weight:bold;transform:scaleX(0.976);transform-origin:0 0;">Services</div>
<div class="t" style="left:10.8px;top:258.34px;font-size:6.1px;color:#606068;font-weight:bold;transform:scaleX(1.007);transform-origin:0 0;">init - Navigator</div>
<div class="t" style="left:152.3px;top:58.87px;font-size:8.3px;color:#44444c;transform:scaleX(0.898);transform-origin:0 0;">JavaFXImagen.java</div>
<div class="t" style="left:241.5px;top:58.87px;font-size:8.3px;color:#44444c;transform:scaleX(0.915);transform-origin:0 0;">Main.java</div>
<div class="t" style="left:147px;top:75.22px;font-size:8.6px;color:#5a5a64;transform:scaleX(0.906);transform-origin:0 0;">Source</div>
<div class="t" style="left:184px;top:75.22px;font-size:8.6px;color:#5a5a64;transform:scaleX(0.949);transform-origin:0 0;">History</div>
<div class="t" style="left:156.25px;top:372.56px;font-size:8.2px;color:#55555e;transform:scaleX(0.965);transform-origin:0 0;">com.decodigo.ejemplos.JavaFXImagen</div>
<div class="t" style="left:143.7px;top:386.64px;font-size:6.8px;color:#7a7a80;">Output - </div>
<div class="t" style="left:169.7px;top:386.64px;font-size:6.8px;color:#44444a;font-weight:bold;transform:scaleX(0.988);transform-origin:0 0;">Run (Main)</div>
<div class="t" style="left:438.75px;top:457.67px;font-size:7.6px;color:#5a5a62;transform:scaleX(0.984);transform-origin:0 0;">Run (Main)</div>
<div class="t" style="left:641.4px;top:457.67px;font-size:7.6px;color:#5a5a62;transform:scaleX(0.987);transform-origin:0 0;">26:1</div>
<div class="t" style="left:688.5px;top:457.67px;font-size:7.6px;color:#5a5a62;transform:scaleX(0.971);transform-origin:0 0;">INS</div>
<div class="t" style="left:703.6px;top:457.67px;font-size:7.6px;color:#5a5a62;transform:scaleX(0.973);transform-origin:0 0;">Unix (LF)</div>
<div class="t" style="left:376px;top:38.69px;font-size:8.4px;color:#2a3a50;transform:scaleX(0.913);transform-origin:0 0;">276.2/405.8MB</div>
</body></html>
